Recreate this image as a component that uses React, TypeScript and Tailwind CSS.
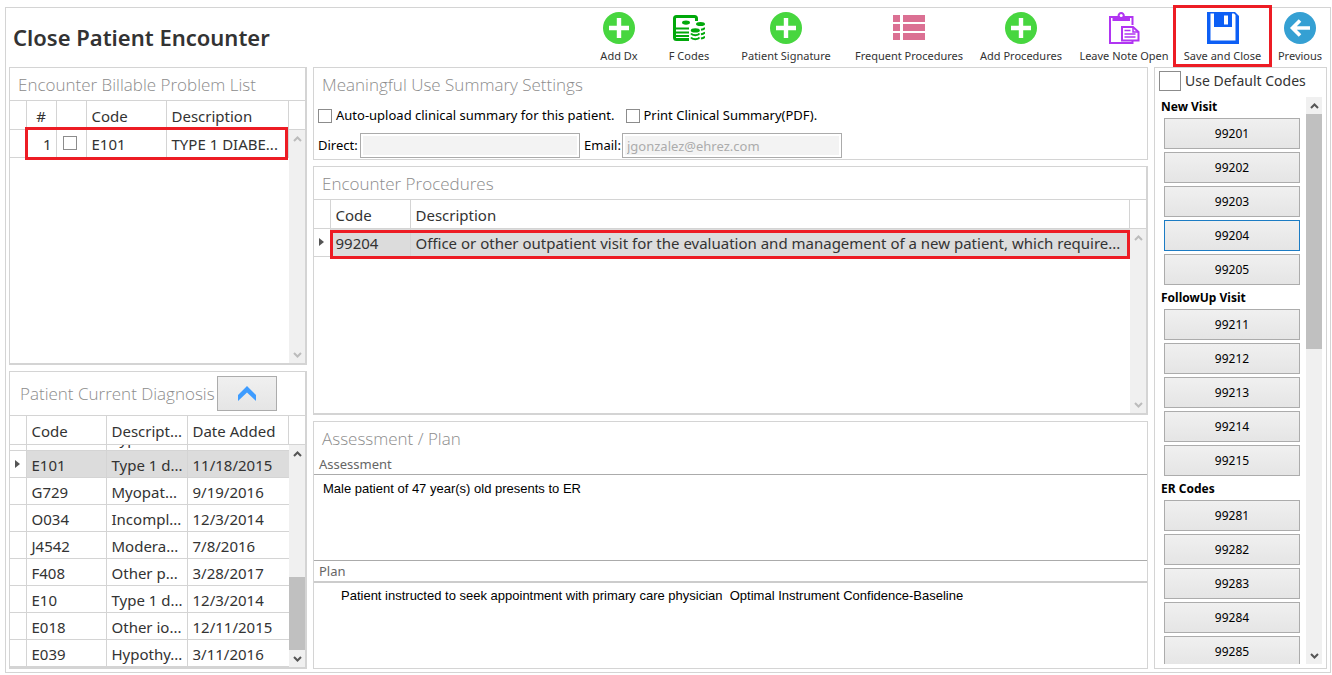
import type { ReactNode } from "react";

const diagnoses = [
  { code: "E11", desc: "Type 2 d...", date: "9/19/2016" },
  { code: "E101", desc: "Type 1 d...", date: "11/18/2015", selected: true },
  { code: "G729", desc: "Myopat...", date: "9/19/2016" },
  { code: "O034", desc: "Incompl...", date: "12/3/2014" },
  { code: "J4542", desc: "Modera...", date: "7/8/2016" },
  { code: "F408", desc: "Other p...", date: "3/28/2017" },
  { code: "E10", desc: "Type 1 d...", date: "12/3/2014" },
  { code: "E018", desc: "Other io...", date: "12/11/2015" },
  { code: "E039", desc: "Hypothy...", date: "3/11/2016" },
];

const codeGroups = [
  { title: "New Visit", codes: ["99201", "99202", "99203", "99204", "99205"] },
  { title: "FollowUp Visit", codes: ["99211", "99212", "99213", "99214", "99215"] },
  { title: "ER Codes", codes: ["99281", "99282", "99283", "99284", "99285"] },
];

const PlusIcon = () => (
  <svg width="32" height="32" viewBox="0 0 32 32">
    <circle cx="16" cy="16" r="16" fill="#47d63f" />
    <path d="M16 6v20M6 16h20" stroke="#fff" strokeWidth="4.4" />
  </svg>
);

const MoneyIcon = () => (
  <svg width="32" height="32" viewBox="0 0 32 32" fill="none" stroke="#00a80a">
    <path d="M23.5 9V6.5a2 2 0 0 0-2-2h-18a2 2 0 0 0-2 2v19a2 2 0 0 0 2 2H16" strokeWidth="3" />
    <path d="M2 16.5h14M2 20.5h14M2 24h14" strokeWidth="2.2" />
    <ellipse cx="13" cy="10.6" rx="4" ry="2.1" fill="#00a80a" stroke="none" />
    <ellipse cx="27.5" cy="12" rx="4.5" ry="2.1" fill="#00a80a" stroke="none" />
    <ellipse cx="22.3" cy="18.4" rx="4.5" ry="2.1" fill="#00a80a" stroke="none" />
    <path d="M18 21.5c1.5 2.2 7 2.2 8.5 0M18 25.5c1.5 2.2 7 2.2 8.5 0" strokeWidth="2" />
    <path d="M28 17.8q3-.5 4-2M28 22.2q3-.5 4-2M28 26.6q3-.5 4-2" strokeWidth="2" />
  </svg>
);

const ListIcon = () => (
  <svg width="32" height="32" viewBox="0 0 32 32" fill="#db7093">
    <path d="M0 3h7v7H0zM10 3h22v7H10zM0 12h7v7H0zM10 12h22v7H10zM0 21h7v7H0zM10 21h22v7H10z" />
  </svg>
);

const NoteIcon = () => (
  <svg width="32" height="32" viewBox="0 0 32 32" fill="none" stroke="#b135f2">
    <path d="M24.5 13V5H2v26h22.5v-2" strokeWidth="2" />
    <path d="M4.5 9V6l5-1.5C9.5 1.5 11 0 13.2 0s3.700 1.500 3.700 4.500L22 6v3z" fill="#b135f2" stroke="none" />
    <circle cx="13.2" cy="3.4" r="1.5" fill="#fff" stroke="none" />
    <path d="M14 15h11l5.500 5v8.500H14z" fill="#fff" strokeWidth="2" />
    <path d="M25 15v5h5.500M16.500 18.500h6M16.500 22h11M16.500 25h11" strokeWidth="1.5" />
  </svg>
);

const SaveIcon = () => (
  <svg width="32" height="32" viewBox="0 0 32 32">
    <path d="M0 0h28l4 4v28H0z" fill="#0d5ff5" />
    <path d="M3.500 1.500H27L28.500 3v25.500h-25z" fill="#fff" />
    <path d="M7 0h18v15H7z" fill="#0d5ff5" />
    <path d="M17 3.500h4v9h-4z" fill="#fff" />
  </svg>
);

const BackIcon = () => (
  <svg width="32" height="32" viewBox="0 0 32 32" fill="none">
    <circle cx="16" cy="16" r="16" fill="#35a0d3" />
    <path d="M26 16H9M16 8.500L8.500 16l7.500 7.500" stroke="#fff" strokeWidth="3.6" />
  </svg>
);

const tools = [
  { label: "Add Dx", icon: <PlusIcon />, width: "w-[76px]" },
  { label: "F Codes", icon: <MoneyIcon />, width: "w-16" },
  { label: "Patient Signature", icon: <PlusIcon />, width: "w-[130px]" },
  { label: "Frequent Procedures", icon: <ListIcon />, width: "w-[116px]" },
  { label: "Add Procedures", icon: <PlusIcon />, width: "w-[108px]" },
  { label: "Leave Note Open", icon: <NoteIcon />, width: "w-[98px]" },
  { label: "Save and Close", icon: <SaveIcon />, width: "w-[99px]", marked: true },
  { label: "Previous", icon: <BackIcon />, width: "w-[56px]" },
];

function Chevron({ down, dim }: { down?: boolean; dim?: boolean }) {
  return (
    <svg width="9" height="6" viewBox="0 0 9 6" fill="none" stroke={dim ? "#bcbcbc" : "#555"} strokeWidth="2">
      <path d={down ? "M1 1l3.500 3.500L8 1" : "M1 5l3.500-3.500L8 5"} />
    </svg>
  );
}

function ScrollBar({ dim, children }: { dim?: boolean; children?: ReactNode }) {
  return (
    <div className="flex w-4 shrink-0 flex-col bg-[#f0f0f0]">
      <button type="button" aria-label="Scroll up" className="flex h-[17px] shrink-0 items-center justify-center">
        <Chevron dim={dim} />
      </button>
      <div className="flex min-h-0 flex-1 flex-col">{children}</div>
      <button type="button" aria-label="Scroll down" className="flex h-[17px] shrink-0 items-center justify-center">
        <Chevron down dim={dim} />
      </button>
    </div>
  );
}

function RowMarker() {
  return (
    <svg width="5" height="8" viewBox="0 0 5 8" className="mx-auto">
      <path d="M0 0l5 4-5 4z" fill="#555" />
    </svg>
  );
}

const title = "font-['Open_Sans','Noto_Sans',sans-serif] text-[17px] font-light text-[#8c8c8c]";
const headCell = "border-r border-[#d4d4d4] pt-[2px] pl-[5px] text-left font-normal whitespace-nowrap";
const cell = "border-r border-b border-[#d4d4d4] pt-[2px] pl-[5px] whitespace-nowrap";
const headTable = "w-full table-fixed border-y border-[#d4d4d4] text-[15px]";

export default function App() {
  return (
    <div className="flex h-screen flex-col bg-white pt-[7px] pr-px pb-[2px] pl-[5px] font-['Noto_Sans','Open_Sans',sans-serif] text-[#333]">
      <div className="flex min-h-0 flex-1 flex-col border border-[#d4d4d4] pr-[3px] pb-[3px] pl-[3px]">
        <header className="flex h-[59px] shrink-0 items-start justify-between">
          <h1 className="pt-3 pl-1 text-[22px] leading-[34px] font-semibold whitespace-nowrap">Close Patient Encounter</h1>
          <nav className="-mr-px flex">
            {tools.map((t) => (
              <button
                key={t.label}
                type="button"
                className={`relative flex h-[59px] shrink-0 flex-col items-center gap-1 pt-1 text-[11px] leading-4 whitespace-nowrap ${t.width}`}
              >
                {t.icon}
                {t.label}
                {t.marked && <span className="absolute inset-x-0 -top-[3px] bottom-0 border-3 border-[#ed1c24]" />}
              </button>
            ))}
          </nav>
        </header>

        <main className="flex min-h-0 flex-1 gap-[6px]">
          {/* Left column */}
          <div className="flex w-[298px] shrink-0 flex-col gap-[6px]">
            <section className="flex min-h-0 flex-1 flex-col border border-r-2 border-b-2 border-[#d4d4d4]">
              <h2 className={`h-8 shrink-0 pl-2 leading-[34px] ${title}`}>Encounter Billable Problem List</h2>
              <table className={headTable}>
                <thead>
                  <tr className="h-[29px]">
                    <th className="w-4 border-r border-[#d4d4d4]" />
                    <th className="w-[30px] border-r border-[#d4d4d4] pt-[2px] font-normal">#</th>
                    <th className="w-[30px] border-r border-[#d4d4d4]" />
                    <th className={`w-20 ${headCell}`}>Code</th>
                    <th className={headCell}>Description</th>
                    <th className="w-[17px]" />
                  </tr>
                </thead>
              </table>
              <div className="flex min-h-0 flex-1">
                <div className="relative min-w-0 flex-1">
                  <table className="w-full table-fixed text-[15px]">
                    <tbody>
                      <tr className="h-[27px]">
                        <td className="w-4 border-r border-b border-[#d4d4d4]" />
                        <td className="w-[30px] border-r border-b border-[#d4d4d4] pt-[2px] pr-1 text-right">1</td>
                        <td className="w-[30px] border-r border-b border-[#d4d4d4]">
                          <input
                            type="checkbox"
                            aria-label="Select E101"
                            className="mr-auto ml-[6px] block size-[14px] appearance-none border border-[#8c8c8c] bg-white"
                          />
                        </td>
                        <td className={`w-20 ${cell}`}>E101</td>
                        <td className={cell}>TYPE 1 DIABE...</td>
                      </tr>
                    </tbody>
                  </table>
                  <span className="absolute -top-[3px] right-px left-[15px] h-[33px] border-3 border-[#ed1c24]" />
                </div>
                <ScrollBar dim />
              </div>
            </section>

            <section className="flex min-h-0 flex-1 flex-col border border-r-2 border-b-2 border-[#d4d4d4]">
              <div className="flex h-[43px] shrink-0 items-center gap-[2px] pl-[10px]">
                <h2 className={`whitespace-nowrap ${title}`}>Patient Current Diagnosis</h2>
                <button
                  type="button"
                  aria-label="Move up"
                  className="flex h-[35px] w-[60px] items-center justify-center border border-[#acacac] bg-linear-to-b from-[#f0f0f0] to-[#e5e5e5]"
                >
                  <svg width="18" height="15" viewBox="0 0 18 15">
                    <path d="M9 0l9 9v6L9 6.500 0 15V9z" fill="#3e9cff" />
                  </svg>
                </button>
              </div>
              <table className={headTable}>
                <thead>
                  <tr className="h-[29px]">
                    <th className="w-4 border-r border-[#d4d4d4]" />
                    <th className={`w-20 ${headCell}`}>Code</th>
                    <th className={`w-[81px] ${headCell}`}>Descript...</th>
                    <th className={headCell}>Date Added</th>
                    <th className="w-[17px]" />
                  </tr>
                </thead>
              </table>
              <div className="flex min-h-0 flex-1">
                <div className="flex min-w-0 flex-1 flex-col justify-end overflow-hidden">
                  <table className="w-full table-fixed text-[15px]">
                    <tbody>
                      {diagnoses.map((d) => (
                        <tr key={d.code} className={`h-[27px] ${d.selected ? "bg-[#dcdcdc]" : ""}`}>
                          <td className="w-4 border-r border-b border-[#d4d4d4] bg-white">{d.selected && <RowMarker />}</td>
                          <td className={`w-20 ${cell}`}>{d.code}</td>
                          <td className={`w-[81px] ${cell}`}>{d.desc}</td>
                          <td className="border-b border-[#d4d4d4] pt-[2px] pl-[5px] whitespace-nowrap">{d.date}</td>
                        </tr>
                      ))}
                    </tbody>
                  </table>
                </div>
                <ScrollBar>
                  <div className="mt-auto h-[39%] bg-[#c0c0c0]" />
                </ScrollBar>
              </div>
            </section>
          </div>

          {/* Middle column */}
          <div className="flex min-w-0 flex-1 flex-col gap-[6px]">
            <section className="h-[93px] shrink-0 border border-[#d4d4d4]">
              <h2 className={`h-9 pl-2 leading-[34px] ${title}`}>Meaningful Use Summary Settings</h2>
              <div className="flex h-6 items-center gap-[11px] pl-1 text-[13px] text-black">
                <label className="flex items-center gap-1 whitespace-nowrap">
                  <input type="checkbox" className="size-[14px] appearance-none border border-[#8c8c8c] bg-white" />
                  Auto-upload clinical summary for this patient.
                </label>
                <label className="flex items-center gap-1 whitespace-nowrap">
                  <input type="checkbox" className="size-[14px] appearance-none border border-[#8c8c8c] bg-white" />
                  Print Clinical Summary(PDF).
                </label>
              </div>
              <div className="flex items-center gap-1 pt-[5px] pl-1 text-[13px] text-black">
                <label htmlFor="direct" className="w-[38px]">Direct:</label>
                <input id="direct" disabled className="h-[25px] w-[220px] border border-[#ababab] bg-[#f3f3f3] px-1 ring-2 ring-white ring-inset" />
                <label htmlFor="email" className="w-[34px]">Email:</label>
                <input
                  id="email"
                  disabled
                  defaultValue="jgonzalez@ehrez.com"
                  className="h-[25px] w-[220px] border border-[#ababab] bg-[#f3f3f3] px-1 text-[#acacac] ring-2 ring-white ring-inset"
                />
              </div>
            </section>

            <section className="flex min-h-0 flex-1 flex-col border border-r-2 border-b-2 border-[#d4d4d4]">
              <h2 className={`h-8 shrink-0 pl-2 leading-[34px] ${title}`}>Encounter Procedures</h2>
              <table className={headTable}>
                <thead>
                  <tr className="h-[29px]">
                    <th className="w-4 border-r border-[#d4d4d4]" />
                    <th className={`w-20 ${headCell}`}>Code</th>
                    <th className={headCell}>Description</th>
                    <th className="w-[17px]" />
                  </tr>
                </thead>
              </table>
              <div className="flex min-h-0 flex-1">
                <div className="relative min-w-0 flex-1">
                  <table className="w-full table-fixed text-[15px]">
                    <tbody>
                      <tr className="h-[27px] bg-[#dcdcdc]">
                        <td className="w-4 border-r border-b border-[#d4d4d4] bg-white"><RowMarker /></td>
                        <td className={`w-20 ${cell}`}>99204</td>
                        <td className="overflow-hidden pt-[2px] pl-[5px] whitespace-nowrap">
                          Office or other outpatient visit for the evaluation and management of a new patient, which require...
                        </td>
                      </tr>
                    </tbody>
                  </table>
                  <span className="absolute top-px right-0 left-4 h-[29px] border-3 border-[#ed1c24]" />
                </div>
                <ScrollBar dim />
              </div>
            </section>

            <section className="flex min-h-0 flex-1 flex-col border border-[#d4d4d4]">
              <h2 className={`h-8 shrink-0 pl-2 leading-[34px] ${title}`}>Assessment / Plan</h2>
              <label htmlFor="assessment" className="h-5 shrink-0 pl-[5px] text-[13px] leading-5 text-[#666]">Assessment</label>
              <textarea
                id="assessment"
                defaultValue="Male patient of 47 year(s) old presents to ER"
                className="h-[87px] shrink-0 resize-none border-y border-[#ababab] py-1 pl-[9px] font-['Liberation_Sans',Arial,sans-serif] text-[13px] text-black"
              />
              <label htmlFor="plan" className="h-5 shrink-0 pl-[5px] text-[13px] leading-5 text-[#666]">Plan</label>
              <textarea
                id="plan"
                defaultValue="Patient instructed to seek appointment with primary care physician  Optimal Instrument Confidence-Baseline"
                className="min-h-0 flex-1 resize-none border-t-2 border-[#ccc] py-[3px] pl-[27px] font-['Liberation_Sans',Arial,sans-serif] text-[13px] text-black"
              />
            </section>
          </div>

          {/* Right column */}
          <aside className="flex w-[173px] shrink-0 flex-col border border-[#d4d4d4] pb-1">
            <label className="flex h-[29px] shrink-0 items-center gap-1 pb-1 pl-1 text-sm whitespace-nowrap">
              <input type="checkbox" className="h-5 w-[22px] appearance-none border border-[#8c8c8c] bg-white" />
              Use Default Codes
            </label>
            <div className="flex min-h-0 flex-1 pr-1">
              <div className="min-w-0 flex-1 overflow-hidden pr-[6px] pl-[6px] text-black">
                {codeGroups.map((g) => (
                  <div key={g.title}>
                    <h3 className="h-[21px] text-xs leading-5 font-bold">{g.title}</h3>
                    <div className="ml-[3px] flex flex-col gap-[3px] pb-[3px]">
                      {g.codes.map((c) => (
                        <button
                          key={c}
                          type="button"
                          className={`h-[31px] border bg-linear-to-b from-[#f0f0f0] to-[#e5e5e5] text-xs ${c === "99204" ? "border-[#1c7cc4]" : "border-[#acacac]"}`}
                        >
                          {c}
                        </button>
                      ))}
                    </div>
                  </div>
                ))}
              </div>
              <ScrollBar>
                <div className="h-[44%] bg-[#c0c0c0]" />
              </ScrollBar>
            </div>
          </aside>
        </main>
      </div>
    </div>
  );
}
